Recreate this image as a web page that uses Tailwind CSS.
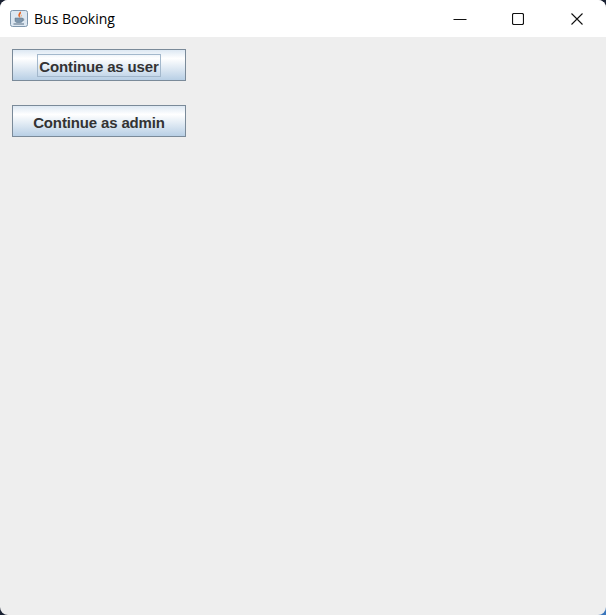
<!DOCTYPE html>
<html lang="en">
<head>
  <meta charset="UTF-8" />
  <title>Bus Booking</title>
  <script src="https://cdn.jsdelivr.net/npm/@tailwindcss/browser@4"></script>
</head>
<body class="h-[615px] w-[606px] overflow-hidden bg-[linear-gradient(135deg,#1a2233_0%,#1a2233_92%,#3a78c0_100%)]">

<div class="flex h-full flex-col overflow-hidden rounded-[8px] bg-[#eeeeee]">
  <!-- title bar -->
  <header class="flex h-[37px] shrink-0 items-center bg-white pl-[10px]">
    <svg class="h-[17px] w-[18px]" viewBox="0 0 18 17">
      <rect x="0.5" y="0.5" width="17" height="16" rx="2" fill="#dde7f1" stroke="#7f97ad"/>
      <path d="M10.5 1.5c1.8 2.2-2 3.2-.2 6.2-3.2-1.2-2-4-.0-6.2z" fill="#e8621f"/>
      <path d="M11.5 4.5c.8 1-.6 1.8-.4 3-1-.9-.4-2.1.4-3z" fill="#f09a55"/>
      <path d="M5 8h7.5v2.6c0 1.3-1 1.9-2 1.9H7c-1 0-2-.6-2-1.9z" fill="#7d95ab" stroke="#566e84" stroke-width="0.5"/>
      <path d="M12.5 8.8h1.2v1.6h-1.4" fill="none" stroke="#566e84" stroke-width="0.7"/>
      <path d="M3.5 14h10.5" stroke="#566e84" stroke-width="1.2"/>
    </svg>
    <span class="ml-[6px] font-['Open_Sans',sans-serif] text-[14px] leading-none text-black">Bus Booking</span>

    <div class="ml-auto flex h-full items-center">
      <div class="flex w-[58px] items-center justify-center">
        <svg class="h-[12px] w-[14px]" viewBox="0 0 14 12"><path d="M0.5 6.5h13" stroke="#111" stroke-width="1"/></svg>
      </div>
      <div class="mr-[1px] flex w-[58px] items-center justify-center">
        <svg class="h-[12px] w-[12px]" viewBox="0 0 12 12"><rect x="0.5" y="0.5" width="11" height="11" rx="1.5" fill="none" stroke="#111" stroke-width="1.2"/></svg>
      </div>
      <div class="flex w-[58px] items-center justify-center">
        <svg class="h-[12px] w-[12px]" viewBox="0 0 12 12"><path d="M0.5 0.5l11 11M11.5 0.5l-11 11" fill="none" stroke="#111" stroke-width="1.1"/></svg>
      </div>
    </div>
  </header>

  <!-- content -->
  <main class="flex flex-col items-start gap-[24px] pl-[12px] pt-[12px] font-['Liberation_Sans',sans-serif]">
    <button class="flex h-[32px] w-[174px] items-center justify-center border border-[#7a8a99] bg-[linear-gradient(to_bottom,#dde8f3_0%,#ffffff_28%,#b8cfe5_100%)] text-[15px] font-bold tracking-[-0.15px] text-[#333333]">
      <span class="flex h-[23px] w-[124px] items-center justify-center whitespace-nowrap border border-[#a3b8cc] pt-[4px]">Continue as user</span>
    </button>
    <button class="flex h-[32px] w-[174px] items-center justify-center whitespace-nowrap border border-[#7a8a99] bg-[linear-gradient(to_bottom,#dde8f3_0%,#ffffff_28%,#b8cfe5_100%)] pt-[4px] text-[15px] font-bold tracking-[-0.15px] text-[#333333]">
      Continue as admin
    </button>
  </main>
</div>

</body>
</html>
